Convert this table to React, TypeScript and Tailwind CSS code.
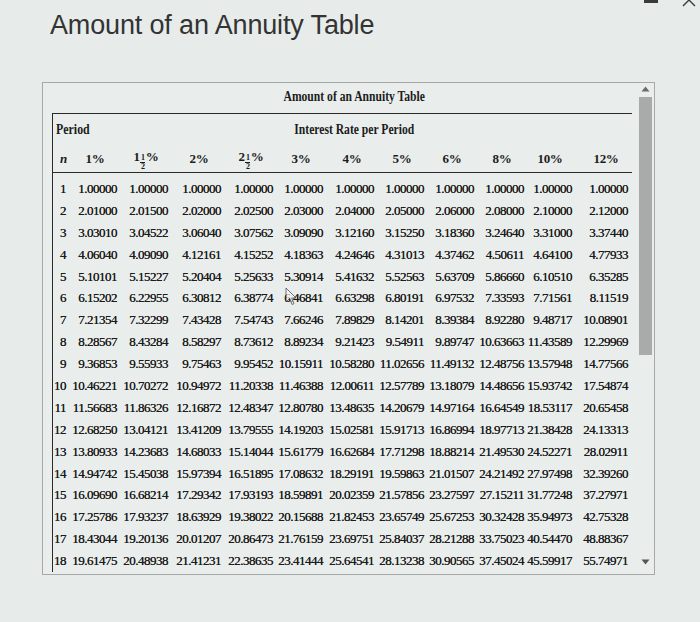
import React from "react";

const rows: string[][] = [
  ["1", "1.00000", "1.00000", "1.00000", "1.00000", "1.00000", "1.00000", "1.00000", "1.00000", "1.00000", "1.00000", "1.00000"],
  ["2", "2.01000", "2.01500", "2.02000", "2.02500", "2.03000", "2.04000", "2.05000", "2.06000", "2.08000", "2.10000", "2.12000"],
  ["3", "3.03010", "3.04522", "3.06040", "3.07562", "3.09090", "3.12160", "3.15250", "3.18360", "3.24640", "3.31000", "3.37440"],
  ["4", "4.06040", "4.09090", "4.12161", "4.15252", "4.18363", "4.24646", "4.31013", "4.37462", "4.50611", "4.64100", "4.77933"],
  ["5", "5.10101", "5.15227", "5.20404", "5.25633", "5.30914", "5.41632", "5.52563", "5.63709", "5.86660", "6.10510", "6.35285"],
  ["6", "6.15202", "6.22955", "6.30812", "6.38774", "6.46841", "6.63298", "6.80191", "6.97532", "7.33593", "7.71561", "8.11519"],
  ["7", "7.21354", "7.32299", "7.43428", "7.54743", "7.66246", "7.89829", "8.14201", "8.39384", "8.92280", "9.48717", "10.08901"],
  ["8", "8.28567", "8.43284", "8.58297", "8.73612", "8.89234", "9.21423", "9.54911", "9.89747", "10.63663", "11.43589", "12.29969"],
  ["9", "9.36853", "9.55933", "9.75463", "9.95452", "10.15911", "10.58280", "11.02656", "11.49132", "12.48756", "13.57948", "14.77566"],
  ["10", "10.46221", "10.70272", "10.94972", "11.20338", "11.46388", "12.00611", "12.57789", "13.18079", "14.48656", "15.93742", "17.54874"],
  ["11", "11.56683", "11.86326", "12.16872", "12.48347", "12.80780", "13.48635", "14.20679", "14.97164", "16.64549", "18.53117", "20.65458"],
  ["12", "12.68250", "13.04121", "13.41209", "13.79555", "14.19203", "15.02581", "15.91713", "16.86994", "18.97713", "21.38428", "24.13313"],
  ["13", "13.80933", "14.23683", "14.68033", "15.14044", "15.61779", "16.62684", "17.71298", "18.88214", "21.49530", "24.52271", "28.02911"],
  ["14", "14.94742", "15.45038", "15.97394", "16.51895", "17.08632", "18.29191", "19.59863", "21.01507", "24.21492", "27.97498", "32.39260"],
  ["15", "16.09690", "16.68214", "17.29342", "17.93193", "18.59891", "20.02359", "21.57856", "23.27597", "27.15211", "31.77248", "37.27971"],
  ["16", "17.25786", "17.93237", "18.63929", "19.38022", "20.15688", "21.82453", "23.65749", "25.67253", "30.32428", "35.94973", "42.75328"],
  ["17", "18.43044", "19.20136", "20.01207", "20.86473", "21.76159", "23.69751", "25.84037", "28.21288", "33.75023", "40.54470", "48.88367"],
  ["18", "19.61475", "20.48938", "21.41231", "22.38635", "23.41444", "25.64541", "28.13238", "30.90565", "37.45024", "45.59917", "55.74971"],
];

function Half() {
  return (
    <span className="inline-flex flex-col items-center leading-none text-[8px] mx-[0.5px] align-[1px]">
      <span className="leading-[8px]">1</span>
      <span className="w-[5px] h-[1px] bg-[#1c1c1c]" />
      <span className="leading-[8px]">2</span>
    </span>
  );
}

const headers: React.ReactNode[] = [
  "1%",
  <>1<Half />%</>,
  "2%",
  <>2<Half />%</>,
  "3%",
  "4%",
  "5%",
  "6%",
  "8%",
  "10%",
  "12%",
];

const gridCols =
  "grid grid-cols-[13px_51px_51px_53px_52px_50px_51px_50px_50px_50px_48px_56px]";

export default function App() {
  return (
    <div
      className="relative w-[700px] h-[622px] overflow-hidden bg-[#e7ecea]"
      style={{ fontFamily: '"Liberation Serif", "Times New Roman", serif' }}
    >
      {/* window controls cut at top */}
      <div className="absolute left-[644px] top-[-2px] w-[14px] h-[5px] bg-[#3a3a3a]" />
      <svg className="absolute left-[682px] top-[-7px]" width="14" height="14" viewBox="0 0 14 14">
        <path d="M1 1 L13 13 M13 1 L1 13" stroke="#3a3a3a" strokeWidth="1.4" />
      </svg>

      <div className="pt-[9px] pl-[50px]">
        <h1
          className="text-[27px] leading-[32px] tracking-[-0.15px] text-[#333] font-normal"
          style={{ fontFamily: '"Liberation Sans", Arial, sans-serif' }}
        >
          Amount of an Annuity Table
        </h1>
      </div>

      <div className="mt-[41px] ml-[42px] w-[613px] h-[493px] border border-[#a6a9a8] flex bg-[#e9eeec]">
        <div className="flex-1 overflow-hidden text-[#1c1c1c]">
          <div className="pt-[6px] pl-[29px] h-[30px] text-center text-[14px] leading-[16px] font-bold">
            <span className="inline-block scale-x-[0.83] origin-center whitespace-nowrap">
              Amount of an Annuity Table
            </span>
          </div>
          <div className="ml-[9px] w-[580px] border-t-[1.5px] border-l border-[#2a2a2a]">
            <div className="flex h-[31px] items-center text-[14px] font-bold">
              <span className="w-[84px] pl-[3px]">
                <span className="inline-block scale-x-[0.85] origin-left">Period</span>
              </span>
              <span className="flex-1 text-center">
                <span className="inline-block scale-x-[0.83] origin-center whitespace-nowrap">
                  Interest Rate per Period
                </span>
              </span>
              <span className="w-[60px]" />
            </div>
            <div
              className={`${gridCols} h-[28px] items-center border-b-[1.5px] border-[#2a2a2a] text-[13px] font-bold tracking-[-0.3px]`}
            >
              <span className="text-right italic -mr-[1px]">n</span>
              {headers.map((h, i) => (
                <span key={i} className="flex justify-end">
                  <span className="w-[44px] text-center whitespace-nowrap">{h}</span>
                </span>
              ))}
            </div>
            <div className="pt-[5px]">
              {rows.map((r) => (
                <div
                  key={r[0]}
                  className={`${gridCols} h-[21.9px] items-center text-[13px] leading-[16px] tracking-[-0.5px] whitespace-nowrap [text-shadow:0_0_0.5px_#1c1c1c]`}
                >
                  {r.map((c, i) => (
                    <span key={i} className="text-right">
                      {c}
                    </span>
                  ))}
                </div>
              ))}
            </div>
          </div>
        </div>

        <div className="w-[18px] flex flex-col items-center">
          <svg width="9" height="6" viewBox="0 0 9 6" className="mt-[3px]">
            <path d="M4.5 0.5 L8.5 5.5 L0.5 5.5 Z" fill="#6b6b6b" />
          </svg>
          <div className="mt-[5px] w-[13px] h-[258px] bg-[#a9abaa]" />
          <div className="flex-1" />
          <svg width="9" height="6" viewBox="0 0 9 6" className="mb-[9px]">
            <path d="M0.5 0.5 L8.5 0.5 L4.5 5.5 Z" fill="#555" />
          </svg>
        </div>
      </div>

      {/* mouse cursor */}
      <svg
        className="absolute left-[285px] top-[287px] opacity-70"
        width="12"
        height="19"
        viewBox="0 0 12 19"
      >
        <path
          d="M1 1 L1 15 L4.5 11.5 L7 17.5 L9 16.6 L6.6 11 L11 11 Z"
          fill="#f4f4f4"
          stroke="#3a3a3a"
          strokeWidth="1"
          strokeLinejoin="round"
        />
      </svg>
    </div>
  );
}
